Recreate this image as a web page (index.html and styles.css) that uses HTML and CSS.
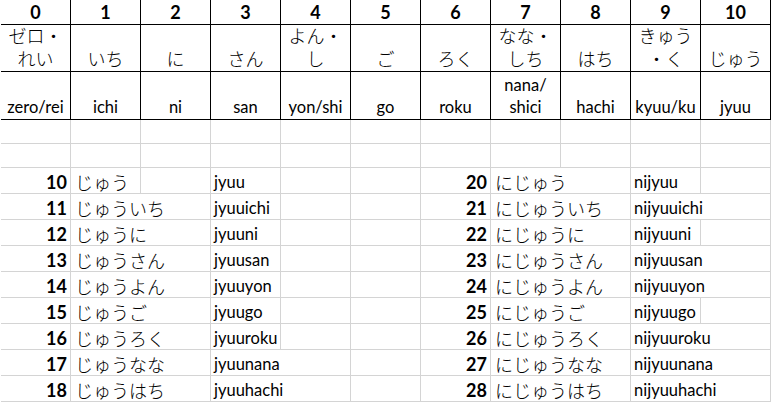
FILE: index.html
```html
<!DOCTYPE html>
<html lang="ja">
<head>
<meta charset="utf-8">
<title>数字</title>
<link rel="stylesheet" href="styles.css">
</head>
<body>
<div class="sheet">
  <div class="c t h">0</div><div class="c t h">1</div><div class="c t h">2</div><div class="c t h">3</div><div class="c t h">4</div><div class="c t h">5</div><div class="c t h">6</div><div class="c t h">7</div><div class="c t h">8</div><div class="c t h">9</div><div class="c t h">10</div>

  <div class="c t jp"><span>ゼロ・<br>れい</span></div><div class="c t jp">いち</div><div class="c t jp">に</div><div class="c t jp">さん</div><div class="c t jp"><span>よん・<br>し</span></div><div class="c t jp">ご</div><div class="c t jp">ろく</div><div class="c t jp"><span>なな・<br>しち</span></div><div class="c t jp">はち</div><div class="c t jp"><span>きゅう<br>・く</span></div><div class="c t jp">じゅう</div>

  <div class="c t ro">zero/rei</div><div class="c t ro">ichi</div><div class="c t ro">ni</div><div class="c t ro">san</div><div class="c t ro">yon/shi</div><div class="c t ro">go</div><div class="c t ro">roku</div><div class="c t ro"><span>nana/<br>shici</span></div><div class="c t ro">hachi</div><div class="c t ro">kyuu/ku</div><div class="c t ro">jyuu</div>

  <div class="c"></div><div class="c"></div><div class="c"></div><div class="c"></div><div class="c"></div><div class="c"></div><div class="c"></div><div class="c"></div><div class="c"></div><div class="c"></div><div class="c"></div>
  <div class="c"></div><div class="c"></div><div class="c"></div><div class="c"></div><div class="c"></div><div class="c"></div><div class="c"></div><div class="c"></div><div class="c"></div><div class="c"></div><div class="c"></div>

  <div class="c n">10</div><div class="c j">じゅう</div><div class="c"></div><div class="c r">jyuu</div><div class="c"></div><div class="c"></div><div class="c n">20</div><div class="c j s2">にじゅう</div><div class="c r">nijyuu</div><div class="c"></div>

  <div class="c n">11</div><div class="c j s2">じゅういち</div><div class="c r">jyuuichi</div><div class="c"></div><div class="c"></div><div class="c n">21</div><div class="c j s2">にじゅういち</div><div class="c r s2">nijyuuichi</div>

  <div class="c n">12</div><div class="c j s2">じゅうに</div><div class="c r">jyuuni</div><div class="c"></div><div class="c"></div><div class="c n">22</div><div class="c j s2">にじゅうに</div><div class="c r">nijyuuni</div><div class="c"></div>

  <div class="c n">13</div><div class="c j s2">じゅうさん</div><div class="c r">jyuusan</div><div class="c"></div><div class="c"></div><div class="c n">23</div><div class="c j s2">にじゅうさん</div><div class="c r s2">nijyuusan</div>

  <div class="c n">14</div><div class="c j s2">じゅうよん</div><div class="c r">jyuuyon</div><div class="c"></div><div class="c"></div><div class="c n">24</div><div class="c j s2">にじゅうよん</div><div class="c r s2">nijyuuyon</div>

  <div class="c n">15</div><div class="c j s2">じゅうご</div><div class="c r">jyuugo</div><div class="c"></div><div class="c"></div><div class="c n">25</div><div class="c j s2">にじゅうご</div><div class="c r">nijyuugo</div><div class="c"></div>

  <div class="c n">16</div><div class="c j s2">じゅうろく</div><div class="c r">jyuuroku</div><div class="c"></div><div class="c"></div><div class="c n">26</div><div class="c j s2">にじゅうろく</div><div class="c r s2">nijyuuroku</div>

  <div class="c n">17</div><div class="c j s2">じゅうなな</div><div class="c r s2">jyuunana</div><div class="c"></div><div class="c n">27</div><div class="c j s2">にじゅうなな</div><div class="c r s2">nijyuunana</div>

  <div class="c n">18</div><div class="c j s2">じゅうはち</div><div class="c r s2">jyuuhachi</div><div class="c"></div><div class="c n">28</div><div class="c j s2">にじゅうはち</div><div class="c r s2">nijyuuhachi</div>
</div>
</body>
</html>
```

FILE: styles.css
```css
html, body {
  margin: 0;
  padding: 0;
  background: #ffffff;
  overflow: hidden;
}

.sheet {
  display: grid;
  grid-template-columns: repeat(11, 70px);
  grid-template-rows: 25px 47px 48px 24px 24px repeat(9, 26px);
  padding-left: 1px;
  width: 771px;
  color: #000000;
  font-family: "Lato", "Liberation Sans", sans-serif;
  font-size: 16.5px;
}

.c {
  box-sizing: border-box;
  border-right: 1px solid #d4d4d4;
  border-bottom: 1px solid #d4d4d4;
  display: flex;
  align-items: flex-end;
  white-space: nowrap;
  min-width: 0;
  line-height: 20px;
}

.s2 {
  grid-column: span 2;
}

.t {
  border-color: #000000;
  justify-content: center;
  text-align: center;
}

.h {
  font-weight: 700;
  font-size: 18px;
  line-height: 22px;
  padding-bottom: 1px;
}

.jp {
  font-family: "Noto Sans CJK JP", sans-serif;
  font-weight: 300;
  font-size: 18px;
  line-height: 23px;
  padding-bottom: 1px;
}

.ro {
  line-height: 22px;
  padding-bottom: 1px;
}

.n {
  justify-content: flex-end;
  font-weight: 700;
  font-size: 18px;
  padding-right: 3px;
  padding-bottom: 1px;
}

.j {
  font-family: "Noto Sans CJK JP", sans-serif;
  font-weight: 300;
  font-size: 18px;
  line-height: 22px;
  padding-left: 4px;
}

.r {
  padding-left: 3px;
  padding-bottom: 1px;
}
```
